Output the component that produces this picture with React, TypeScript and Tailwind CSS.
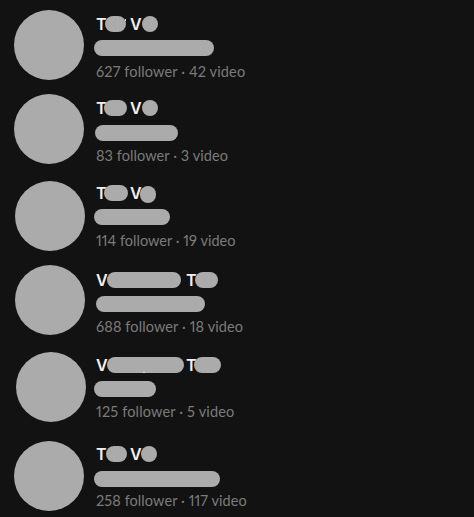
type NamePart = {
  letter: string;
  slot: string;
  mask: string;
  // sliver of the covered name that shows at the edge of the mask
  peek?: string;
};

type Account = {
  row: string;
  avatar: string;
  name: string;
  parts: NamePart[];
  handle: string;
  meta: string;
  metaClass: string;
};

const accounts: Account[] = [
  {
    row: "h-[85px]",
    avatar: "ml-[14px] mr-[12px] mt-[10px]",
    name: "pt-[16px]",
    parts: [
      {
        letter: "T",
        slot: "w-[9px]",
        mask: "w-[21px] h-[16px] mr-[4px]",
        peek: "right-0 top-[3px] h-[2px] w-px",
      },
      { letter: "V", slot: "w-[12px]", mask: "w-[16px] h-[16px]" },
    ],
    handle: "mt-[8px] -ml-[2px] w-[120px]",
    meta: "627 follower · 42 video",
    metaClass: "mt-[5px] tracking-[0.14px]",
  },
  {
    row: "h-[85px]",
    avatar: "ml-[14px] mr-[12px] mt-[9px]",
    name: "pt-[15px]",
    parts: [
      { letter: "T", slot: "w-[8px]", mask: "w-[23px] h-[16px] mr-[3px]" },
      { letter: "V", slot: "w-[12px]", mask: "w-[16px] h-[16px]" },
    ],
    handle: "mt-[9px] -ml-px w-[83px]",
    meta: "83 follower · 3 video",
    metaClass: "mt-[4px] tracking-[0.08px]",
  },
  {
    row: "h-[85px]",
    avatar: "ml-[15px] mr-[11px] mt-[11px]",
    name: "pt-[15px]",
    parts: [
      { letter: "T", slot: "w-[8px]", mask: "w-[24px] h-[16px] mr-[2px]" },
      { letter: "V", slot: "w-[10px]", mask: "w-[16px] h-[17px] mt-px" },
    ],
    handle: "mt-[8px] -ml-[2px] w-[76px]",
    meta: "114 follower · 19 video",
    metaClass: "mt-[5px] tracking-[0.02px]",
  },
  {
    row: "h-[85px]",
    avatar: "ml-[15px] mr-[11px] mt-[10px]",
    name: "pt-[17px]",
    parts: [
      { letter: "V", slot: "w-[11px]", mask: "w-[74px] h-[16px] mr-[5px]" },
      { letter: "T", slot: "w-[9px]", mask: "w-[23px] h-[16px]" },
    ],
    handle: "mt-[8px] w-[109px]",
    meta: "688 follower · 18 video",
    metaClass: "mt-[4px] tracking-[0.11px]",
  },
  {
    row: "h-[87px]",
    avatar: "ml-[16px] mr-[10px] mt-[12px]",
    name: "pt-[17px]",
    parts: [
      {
        letter: "V",
        slot: "w-[11px]",
        mask: "w-[77px] h-[16px] mr-[2px]",
        peek: "left-[36px] bottom-0 h-px w-[2px]",
      },
      { letter: "T", slot: "w-[8px]", mask: "w-[27px] h-[16px]" },
    ],
    handle: "mt-[8px] -ml-[2px] w-[62px]",
    meta: "125 follower · 5 video",
    metaClass: "mt-[4px] tracking-[0.16px]",
  },
  {
    row: "h-[90px]",
    avatar: "ml-[14px] mr-[12px] mt-[14px]",
    name: "pt-[19px]",
    parts: [
      { letter: "T", slot: "w-[10px]", mask: "w-[21px] h-[16px] mr-[3px]" },
      { letter: "V", slot: "w-[11px]", mask: "w-[16px] h-[16px]" },
    ],
    handle: "mt-[9px] -ml-[2px] w-[126px]",
    meta: "258 follower · 117 video",
    metaClass: "mt-[3px] tracking-[0.08px]",
  },
];

function AccountRow({ row, avatar, name, parts, handle, meta, metaClass }: Account) {
  return (
    <li className={`flex items-start ${row}`}>
      <div className={`size-[70px] shrink-0 rounded-full bg-[#ababab] ${avatar}`} />
      <div className={name}>
        <h2 className="flex h-4 items-start font-['Inter',sans-serif] text-[16px] leading-4 font-semibold text-[#f0f0f0]">
          {parts.map(({ letter, slot, mask, peek }) => (
            <span key={letter} className="flex items-start">
              <span className={`shrink-0 ${slot}`}>{letter}</span>
              <span className={`relative shrink-0 rounded-full bg-[#ababab] ${mask}`}>
                {peek && <span className={`absolute bg-[#e0e0e0] ${peek}`} />}
              </span>
            </span>
          ))}
        </h2>
        <div className={`h-4 rounded-full bg-[#ababab] ${handle}`} />
        <p className={`text-[14.5px] leading-[22px] whitespace-nowrap text-[#7b7b7b] proportional-nums ${metaClass}`}>
          {meta}
        </p>
      </div>
    </li>
  );
}

export default function App() {
  return (
    <main className="h-[517px] w-[474px] overflow-hidden bg-[#121212] font-['Lato',sans-serif]">
      <ul>
        {accounts.map((account) => (
          <AccountRow key={account.meta} {...account} />
        ))}
      </ul>
    </main>
  );
}
